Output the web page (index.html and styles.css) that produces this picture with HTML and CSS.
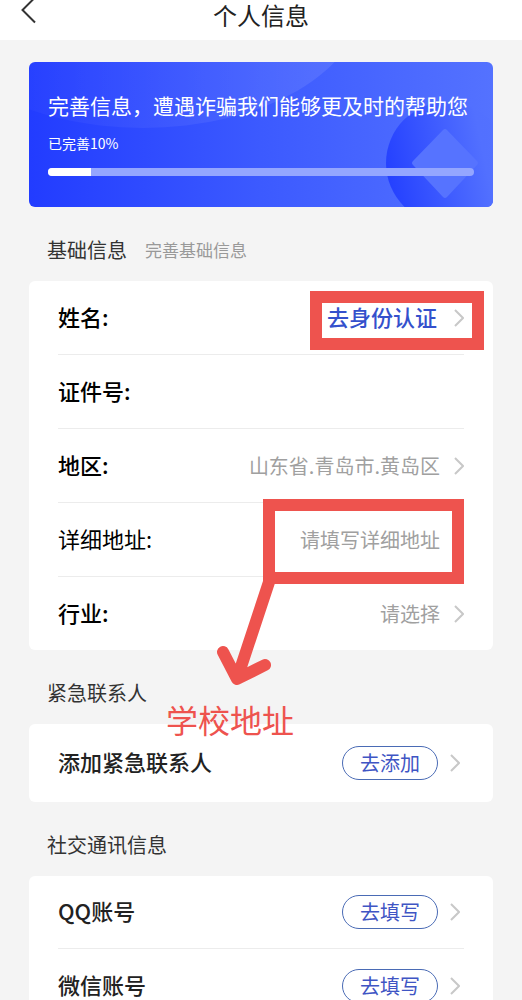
FILE: index.html
```html
<!DOCTYPE html>
<html lang="zh-CN">
<head>
<meta charset="utf-8">
<meta name="viewport" content="width=device-width, initial-scale=1">
<title>个人信息</title>
<link rel="stylesheet" href="styles.css">
</head>
<body>
<div class="page">
  <header class="topbar">
    <button class="back" type="button" aria-label="返回">
      <svg width="16" height="28" viewBox="0 0 16 28"><path d="M14 1.500 1.500 14 14 26.500"/></svg>
    </button>
    <h1 class="topbar-title">个人信息</h1>
  </header>

  <main class="content">
    <section class="banner">
      <svg class="banner-art" viewBox="0 0 464 145" preserveAspectRatio="xMaxYMid slice" aria-hidden="true">
        <defs>
          <linearGradient id="glow" x1="0" x2="1" y1="0" y2="0">
            <stop offset="0" stop-color="#fff" stop-opacity="0"/>
            <stop offset="1" stop-color="#fff" stop-opacity=".1"/>
          </linearGradient>
          <linearGradient id="disc" x1="0" x2="1" y1=".6" y2=".4">
            <stop offset="0" stop-color="#2440ff"/>
            <stop offset=".8" stop-color="#5270ff"/>
            <stop offset="1" stop-color="#5270ff" stop-opacity="0"/>
          </linearGradient>
        </defs>
        <ellipse cx="114" cy="-62" rx="219" ry="128" fill="url(#glow)"/>
        <circle cx="418" cy="101" r="61" fill="url(#disc)"/>
        <path d="M414 68q2-2 4 0l30 31q2 2 0 4l-30 32q-2 2-4 0l-30-32q-2-2 0-4z" fill="#5673ff"/>
      </svg>
      <h2 class="banner-title">完善信息，遭遇诈骗我们能够更及时的帮助您</h2>
      <label class="banner-note" for="done">已完善10%</label>
      <progress class="banner-bar" id="done" value="10" max="100"></progress>
    </section>

    <div class="section-head">
      <h2 class="section-title">基础信息</h2>
      <span class="section-hint">完善基础信息</span>
    </div>
    <section class="card">
      <div class="row">
        <span class="label strong">姓名:</span>
        <button class="value verify" type="button"><span class="verify-text">去身份认证</span>
          <svg class="chevron" viewBox="0 0 10 18"><path d="M1 1l8 8-8 8"/></svg>
        </button>
        <span class="mark mark-verify"></span>
      </div>
      <div class="row">
        <span class="label strong">证件号:</span>
      </div>
      <div class="row">
        <span class="label strong">地区:</span>
        <button class="value" type="button">山东省.青岛市.黄岛区
          <svg class="chevron" viewBox="0 0 10 18"><path d="M1 1l8 8-8 8"/></svg>
        </button>
      </div>
      <div class="row">
        <label class="label" for="address">详细地址:</label>
        <input class="address" id="address" type="text" placeholder="请填写详细地址">
        <span class="mark mark-address"></span>
        <svg class="mark-arrow" width="70" height="120" viewBox="0 0 70 120" aria-hidden="true">
          <path d="M56 6 22 109M8 82 22 109 50 95"/>
        </svg>
        <span class="mark-text">学校地址</span>
      </div>
      <div class="row">
        <span class="label strong">行业:</span>
        <button class="value" type="button">请选择
          <svg class="chevron" viewBox="0 0 10 18"><path d="M1 1l8 8-8 8"/></svg>
        </button>
      </div>
    </section>

    <div class="section-head">
      <h2 class="section-title">紧急联系人</h2>
    </div>
    <section class="card contact">
      <div class="row soft">
        <span class="label strong">添加紧急联系人</span>
        <button class="pill" type="button">去添加</button>
        <svg class="chevron" viewBox="0 0 10 18"><path d="M1 1l8 8-8 8"/></svg>
      </div>
    </section>

    <div class="section-head">
      <h2 class="section-title">社交通讯信息</h2>
    </div>
    <section class="card social">
      <div class="row soft">
        <span class="label strong">QQ账号</span>
        <button class="pill" type="button">去填写</button>
        <svg class="chevron" viewBox="0 0 10 18"><path d="M1 1l8 8-8 8"/></svg>
      </div>
      <div class="row soft">
        <span class="label strong">微信账号</span>
        <button class="pill" type="button">去填写</button>
        <svg class="chevron" viewBox="0 0 10 18"><path d="M1 1l8 8-8 8"/></svg>
      </div>
    </section>
  </main>
</div>
</body>
</html>
```
FILE: styles.css
```css
* {
  box-sizing: border-box;
}

body {
  margin: 0;
  background: #f4f4f4;
  color: #000;
  font-family: "Noto Sans CJK SC", "Noto Sans", sans-serif;
}

button,
input {
  margin: 0;
  padding: 0;
  border: 0;
  background: none;
  font: inherit;
}

h1,
h2 {
  margin: 0;
  font-weight: 400;
}

.page {
  display: flex;
  flex-direction: column;
  height: 100vh;
}

.topbar {
  display: grid;
  grid-template-columns: 60px 1fr 60px;
  height: 40px;
  flex: none;
  background: #fff;
}

.back {
  display: flex;
  align-items: flex-start;
  padding-left: 21px;
  margin-top: -4px;
}

.back svg {
  fill: none;
  stroke: #333;
  stroke-width: 2;
}

.topbar-title {
  color: #222;
  font-size: 24px;
  line-height: 30px;
  text-align: center;
}

.content {
  flex: 1;
  min-height: 0;
  padding: 22px 29px 0;
  overflow: hidden auto;
  scrollbar-width: none;
}

.banner {
  position: relative;
  display: flex;
  flex-direction: column;
  padding: 28px 19px 31px;
  border-radius: 6px;
  background: linear-gradient(90deg, #223cff, #3c5aff 50%, #5472ff);
  color: #fff;
  overflow: hidden;
}

.banner > * {
  position: relative;
}

.banner > .banner-art {
  position: absolute;
  inset: 0;
  width: 100%;
  height: 100%;
}

.banner-title {
  font-size: 21px;
  line-height: 30px;
  white-space: nowrap;
}

.banner-note {
  margin-top: 13px;
  font-size: 14px;
  line-height: 20px;
}

.banner-bar {
  appearance: none;
  display: block;
  width: 100%;
  height: 8px;
  margin-top: 15px;
  border: 0;
  border-radius: 4px;
  background: #94a6ff;
  overflow: hidden;
}

.banner-bar::-webkit-progress-bar {
  background: #94a6ff;
}

.banner-bar::-webkit-progress-value {
  background: #fff;
}

.section-head {
  display: flex;
  gap: 18px;
  padding: 28px 18px 16px;
  line-height: 30px;
}

.section-title {
  color: #333;
  font-size: 20px;
}

.section-hint {
  color: #999;
  font-size: 17px;
}

.card {
  padding: 0 29px;
  border-radius: 6px;
  background: #fff;
}

.row {
  position: relative;
  display: flex;
  align-items: center;
  height: 74px;
  border-bottom: 1px solid #ececec;
}

.row:last-child {
  height: 73px;
  border-bottom: 0;
}

.contact .row {
  height: 78px;
}

.social .row {
  height: 73px;
}

.soft {
  color: #222;
}

.soft .chevron {
  margin: 0 4px 0 12px;
}

.label {
  margin-right: auto;
  padding-bottom: 4px;
  font-size: 22px;
  line-height: 30px;
}

.strong {
  font-weight: 500;
}

.value {
  display: flex;
  align-items: center;
  gap: 14px;
  color: #a0a0a0;
  font-size: 20px;
  line-height: 30px;
}

.verify {
  gap: 17px;
  color: #3450cc;
  font-size: 22px;
  font-weight: 500;
}

.verify-text {
  padding-bottom: 4px;
}

.chevron {
  width: 10px;
  height: 18px;
  flex: none;
  fill: none;
  stroke: #c8c8c8;
  stroke-width: 2;
}

.address {
  width: 160px;
  margin-right: 24px;
  color: #333;
  font-size: 20px;
  line-height: 30px;
  text-align: right;
}

.address::placeholder {
  color: #a0a0a0;
  opacity: 1;
}

.pill {
  width: 96px;
  height: 34px;
  border: 1px solid #4a6bb5;
  border-radius: 17px;
  color: #3f55c4;
  font-size: 20px;
  line-height: 30px;
}

/* Red guide marks drawn over the form */
.mark {
  position: absolute;
  border: 12px solid #ee534e;
  pointer-events: none;
}

.mark-verify {
  top: 10px;
  right: -20px;
  width: 174px;
  height: 59px;
}

.mark-address {
  top: -4px;
  right: 0;
  width: 201px;
  height: 85px;
  z-index: 1;
}

.mark-arrow {
  position: absolute;
  z-index: 1;
  top: 67px;
  right: 179px;
  fill: none;
  stroke: #ee534e;
  stroke-width: 12;
  stroke-linecap: round;
  stroke-linejoin: round;
  pointer-events: none;
}

.mark-text {
  position: absolute;
  z-index: 1;
  top: 196px;
  right: 170px;
  color: #ee534e;
  font-size: 32px;
  line-height: 40px;
  white-space: nowrap;
  pointer-events: none;
}
```
